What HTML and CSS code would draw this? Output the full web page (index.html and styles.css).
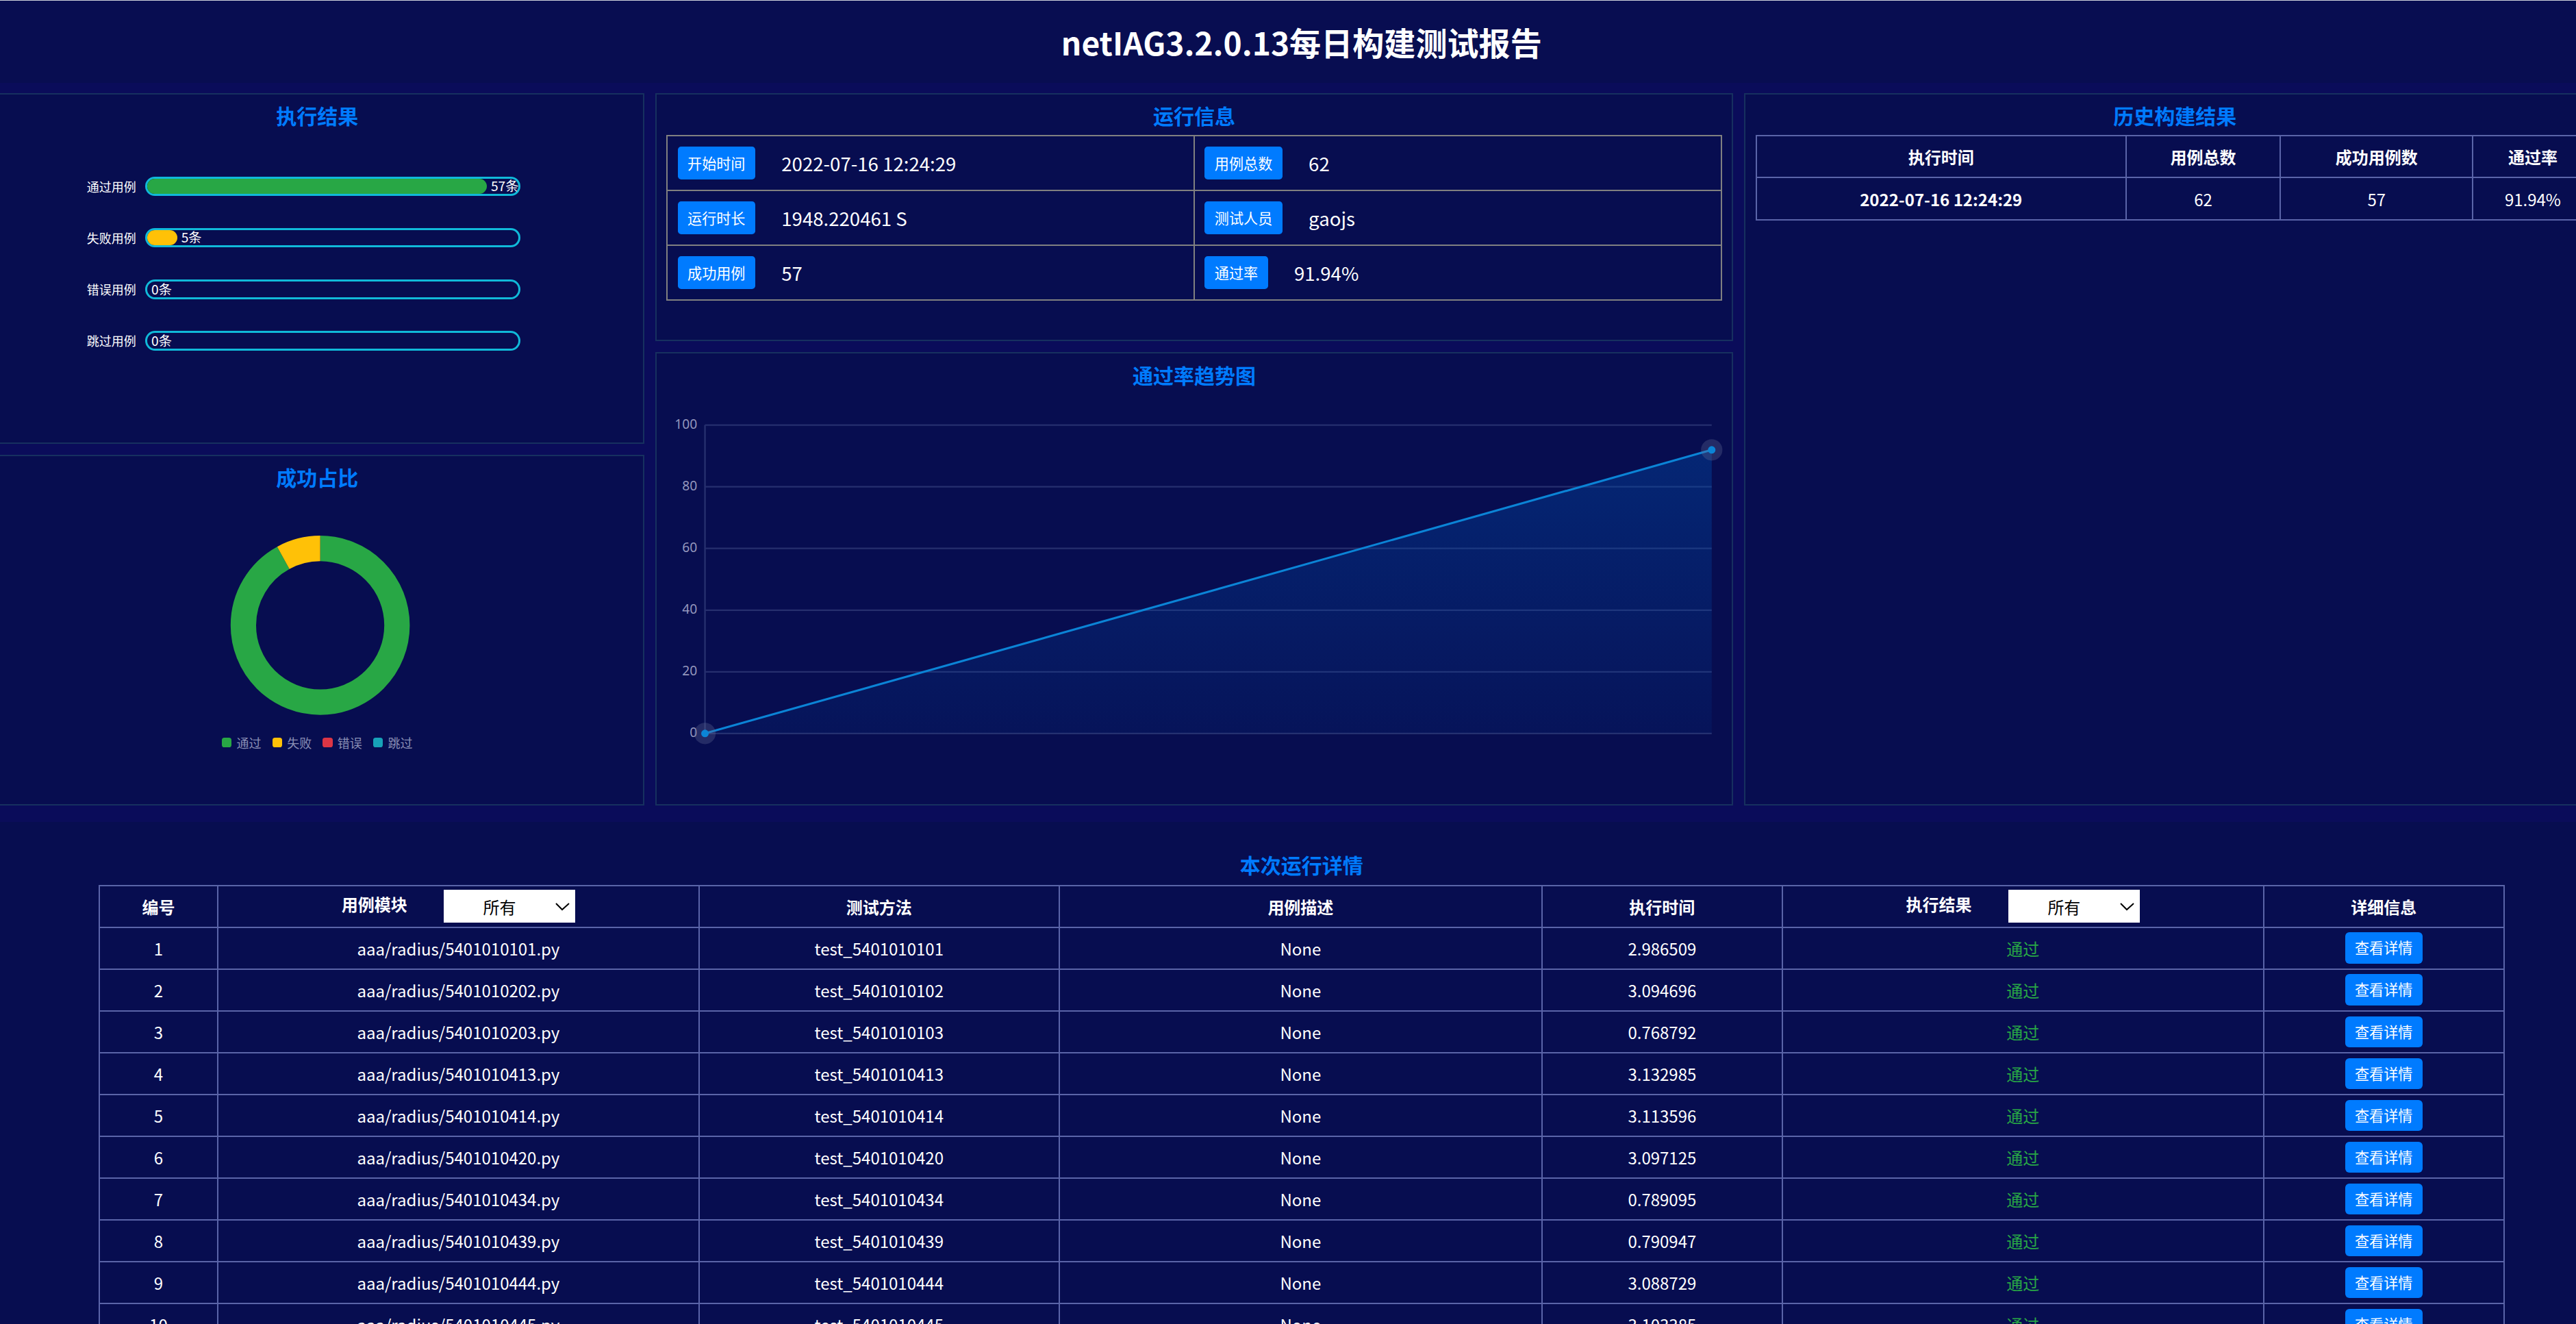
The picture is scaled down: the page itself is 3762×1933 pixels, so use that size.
FILE: index.html
```html
<!DOCTYPE html>
<html lang="zh-CN">
<head>
    <meta charset="UTF-8">
    <meta name="viewport" content="width=device-width, initial-scale=1.0">
    <title>netIAG3.2.0.13每日构建测试报告</title>
    <link rel="stylesheet" href="styles.css">
</head>
<body>
<div class="page">
    <header class="top">
        <h1>netIAG3.2.0.13每日构建测试报告</h1>
    </header>

    <div class="board">
        <div class="col col-left">
            <section class="panel summary">
                <h3>执行结果</h3>
                <div class="bars">
                    <div class="bar-row">
                        <span class="bar-label">通过用例</span>
                        <div class="track"><div class="fill pass" style="width: 91.94%"></div><span class="count">57条</span></div>
                    </div>
                    <div class="bar-row">
                        <span class="bar-label">失败用例</span>
                        <div class="track"><div class="fill fail" style="width: 8.06%"></div><span class="count">5条</span></div>
                    </div>
                    <div class="bar-row">
                        <span class="bar-label">错误用例</span>
                        <div class="track"><div class="fill error" style="width: 0%"></div><span class="count">0条</span></div>
                    </div>
                    <div class="bar-row">
                        <span class="bar-label">跳过用例</span>
                        <div class="track"><div class="fill skip" style="width: 0%"></div><span class="count">0条</span></div>
                    </div>
                </div>
            </section>

            <section class="panel ratio">
                <h3>成功占比</h3>
                <svg class="donut" width="384" height="140" viewBox="0 0 384 140">
                    <g transform="rotate(-90 194 80.8)">
                        <circle cx="194" cy="80.8" r="46.75" fill="none" stroke="#28a745" stroke-width="15.5"
                                stroke-dasharray="270.05 293.74"></circle>
                        <circle cx="194" cy="80.8" r="46.75" fill="none" stroke="#ffc107" stroke-width="15.5"
                                stroke-dasharray="23.69 293.74" stroke-dashoffset="-270.05"></circle>
                    </g>
                </svg>
                <ul class="legend">
                    <li><i class="dot pass"></i>通过</li>
                    <li><i class="dot fail"></i>失败</li>
                    <li><i class="dot error"></i>错误</li>
                    <li><i class="dot skip"></i>跳过</li>
                </ul>
            </section>
        </div>

        <div class="col col-mid">
            <section class="panel info">
                <h3>运行信息</h3>
                <table class="info-table">
                    <tr>
                        <td><div class="cell"><span class="tag">开始时间</span><span class="val">2022-07-16 12:24:29</span></div></td>
                        <td><div class="cell"><span class="tag">用例总数</span><span class="val">62</span></div></td>
                    </tr>
                    <tr>
                        <td><div class="cell"><span class="tag">运行时长</span><span class="val">1948.220461 S</span></div></td>
                        <td><div class="cell"><span class="tag">测试人员</span><span class="val">gaojs</span></div></td>
                    </tr>
                    <tr>
                        <td><div class="cell"><span class="tag">成功用例</span><span class="val">57</span></div></td>
                        <td><div class="cell"><span class="tag">通过率</span><span class="val">91.94%</span></div></td>
                    </tr>
                </table>
            </section>

            <section class="panel trend">
                <h3>通过率趋势图</h3>
                <svg class="trend-chart" width="654" height="240" viewBox="0 0 654 240">
                    <defs>
                        <linearGradient id="area" x1="0" y1="0" x2="0" y2="1">
                            <stop offset="0" stop-color="#0050b0" stop-opacity="0.38"></stop>
                            <stop offset="1" stop-color="#0050b0" stop-opacity="0.1"></stop>
                        </linearGradient>
                    </defs>
                    <g class="grid">
                        <line x1="29.4" y1="21.5" x2="642" y2="21.5"></line>
                        <line x1="29.4" y1="59" x2="642" y2="59"></line>
                        <line x1="29.4" y1="96.5" x2="642" y2="96.5"></line>
                        <line x1="29.4" y1="134.1" x2="642" y2="134.1"></line>
                        <line x1="29.4" y1="171.6" x2="642" y2="171.6"></line>
                        <line x1="29.4" y1="209.1" x2="642" y2="209.1"></line>
                        <line x1="29.4" y1="21.5" x2="29.4" y2="209.1"></line>
                    </g>
                    <g class="axis">
                        <text x="24.7" y="21.5">100</text>
                        <text x="24.7" y="59">80</text>
                        <text x="24.7" y="96.5">60</text>
                        <text x="24.7" y="134.1">40</text>
                        <text x="24.7" y="171.6">20</text>
                        <text x="24.7" y="209.1">0</text>
                    </g>
                    <polygon points="29.4,209.1 642,36.6 642,209.1" fill="url(#area)"></polygon>
                    <line class="trend-line" x1="29.4" y1="209.1" x2="642" y2="36.6"></line>
                    <circle class="halo" cx="29.4" cy="209.1" r="6.5"></circle>
                    <circle class="halo" cx="642" cy="36.6" r="6.5"></circle>
                    <circle class="point" cx="29.4" cy="209.1" r="2.3"></circle>
                    <circle class="point" cx="642" cy="36.6" r="2.3"></circle>
                </svg>
            </section>
        </div>

        <section class="panel history">
            <h3>历史构建结果</h3>
            <table class="history-table">
                <colgroup>
                    <col style="width: 225px">
                    <col style="width: 94px">
                    <col style="width: 117px">
                    <col>
                </colgroup>
                <tr>
                    <th>执行时间</th>
                    <th>用例总数</th>
                    <th>成功用例数</th>
                    <th>通过率</th>
                </tr>
                <tr>
                    <td class="strong">2022-07-16 12:24:29</td>
                    <td>62</td>
                    <td>57</td>
                    <td>91.94%</td>
                </tr>
            </table>
        </section>
    </div>

    <section class="detail">
        <h3>本次运行详情</h3>
        <table class="detail-table">
            <colgroup>
                <col style="width: 72px">
                <col style="width: 293px">
                <col style="width: 219px">
                <col style="width: 294px">
                <col style="width: 146px">
                <col style="width: 293px">
                <col>
            </colgroup>
            <tr>
                <th>编号</th>
                <th>用例模块 <select class="filter"><option>所有</option></select></th>
                <th>测试方法</th>
                <th>用例描述</th>
                <th>执行时间</th>
                <th>执行结果 <select class="filter"><option>所有</option><option>通过</option><option>失败</option></select></th>
                <th>详细信息</th>
            </tr>
            <tr><td>1</td><td>aaa/radius/5401010101.py</td><td>test_5401010101</td><td>None</td><td>2.986509</td><td class="ok">通过</td><td><button class="btn-detail">查看详情</button></td></tr>
            <tr><td>2</td><td>aaa/radius/5401010202.py</td><td>test_5401010102</td><td>None</td><td>3.094696</td><td class="ok">通过</td><td><button class="btn-detail">查看详情</button></td></tr>
            <tr><td>3</td><td>aaa/radius/5401010203.py</td><td>test_5401010103</td><td>None</td><td>0.768792</td><td class="ok">通过</td><td><button class="btn-detail">查看详情</button></td></tr>
            <tr><td>4</td><td>aaa/radius/5401010413.py</td><td>test_5401010413</td><td>None</td><td>3.132985</td><td class="ok">通过</td><td><button class="btn-detail">查看详情</button></td></tr>
            <tr><td>5</td><td>aaa/radius/5401010414.py</td><td>test_5401010414</td><td>None</td><td>3.113596</td><td class="ok">通过</td><td><button class="btn-detail">查看详情</button></td></tr>
            <tr><td>6</td><td>aaa/radius/5401010420.py</td><td>test_5401010420</td><td>None</td><td>3.097125</td><td class="ok">通过</td><td><button class="btn-detail">查看详情</button></td></tr>
            <tr><td>7</td><td>aaa/radius/5401010434.py</td><td>test_5401010434</td><td>None</td><td>0.789095</td><td class="ok">通过</td><td><button class="btn-detail">查看详情</button></td></tr>
            <tr><td>8</td><td>aaa/radius/5401010439.py</td><td>test_5401010439</td><td>None</td><td>0.790947</td><td class="ok">通过</td><td><button class="btn-detail">查看详情</button></td></tr>
            <tr><td>9</td><td>aaa/radius/5401010444.py</td><td>test_5401010444</td><td>None</td><td>3.088729</td><td class="ok">通过</td><td><button class="btn-detail">查看详情</button></td></tr>
            <tr><td>10</td><td>aaa/radius/5401010445.py</td><td>test_5401010445</td><td>None</td><td>3.103385</td><td class="ok">通过</td><td><button class="btn-detail">查看详情</button></td></tr>
            <tr><td>11</td><td>aaa/radius/5401010446.py</td><td>test_5401010446</td><td>None</td><td>3.095412</td><td class="ok">通过</td><td><button class="btn-detail">查看详情</button></td></tr>
        </table>
    </section>
</div>
</body>
</html>
```

FILE: styles.css
```css
html {
    zoom: 2.4;
    background: #070d50;
}

body {
    margin: 0;
    overflow: hidden;
    font-family: "Noto Sans CJK SC", "Noto Sans", sans-serif;
    color: #fff;
    background: #070d50;
}

.page {
    width: 1584px;
    border-top: 0.5px solid #cfd2dc;
}

.top {
    height: 50px;
    background: #080d51;
}

.top h1 {
    margin: 0;
    font-size: 19.2px;
    line-height: 50px;
    font-weight: bold;
    text-align: center;
}

/* three columns of panels */
.board {
    display: grid;
    grid-template-columns: 398px 656px 524px;
    column-gap: 6.7px;
    margin-left: -6px;
    padding: 6.2px 0 10px;
    background: #0a0c5a;
}

.col {
    display: grid;
    grid-template-columns: minmax(0, 1fr);
    row-gap: 6.7px;
}

.col-left {
    grid-template-rows: 213.3px 213.3px;
}

.col-mid {
    grid-template-rows: 151px 275.6px;
}

.panel {
    box-sizing: border-box;
    min-width: 0;
    border: 1px solid #16305f;
    background: #070d50;
    padding: 4px 6px 0;
}

.panel h3,
.detail h3 {
    margin: 0;
    font-size: 12.5px;
    line-height: 18px;
    color: #007bff;
    text-align: center;
}

/* execution result bars */
.bars {
    margin-top: 18.2px;
}

.bar-row {
    display: flex;
    align-items: center;
    height: 31.3px;
    padding-left: 52px;
}

.bar-label {
    width: 30px;
    margin-right: 5.5px;
    font-size: 7.5px;
    text-align: right;
    white-space: nowrap;
}

.track {
    display: flex;
    align-items: center;
    box-sizing: border-box;
    width: 228.5px;
    height: 12px;
    border: 1.5px solid #10b9d9;
    border-radius: 6px;
}

.fill {
    height: 100%;
    border-radius: 6px;
}

.pass { background: #28a745; }
.fail { background: #ffc107; }
.error { background: #dc3545; }
.skip { background: #17a2b8; }

.count {
    margin-left: 2.5px;
    font-size: 8px;
    line-height: 1;
    white-space: nowrap;
}

/* donut */
.donut {
    display: block;
}

.legend {
    display: flex;
    justify-content: center;
    gap: 6.7px;
    margin: 6.3px 0 0;
    padding: 0;
    list-style: none;
    font-size: 7.5px;
    line-height: 12px;
    color: #8a8fb5;
}

.legend li {
    display: flex;
    align-items: center;
}

.dot {
    width: 6px;
    height: 6px;
    margin-right: 3px;
    border-radius: 1.5px;
}

/* run info */
.info-table {
    width: 100%;
    margin-top: 2.8px;
    border-collapse: collapse;
    table-layout: fixed;
}

.info-table td {
    height: 32.5px;
    padding: 0 6px;
    border: 1px solid #808080;
    white-space: nowrap;
}

.cell {
    display: flex;
    align-items: center;
}

.tag {
    height: 20px;
    line-height: 20px;
    padding: 0 6px;
    background: #007bff;
    border-radius: 2px;
    font-size: 8.8px;
}

.val {
    margin-left: 16px;
    font-size: 11.5px;
    line-height: 20px;
}

/* trend chart */
.trend-chart {
    display: block;
    margin: 0 -6px;
}

.grid line {
    stroke: #262f6e;
    stroke-width: 1;
}

.axis text {
    font-family: "Noto Sans", sans-serif;
    font-size: 8px;
    fill: #9497bd;
    text-anchor: end;
    dominant-baseline: middle;
}

.trend-line {
    stroke: #0b84d6;
    stroke-width: 1.3;
}

.halo {
    fill: rgba(100, 110, 150, 0.32);
}

.point {
    fill: #0b84d6;
}

/* history */
.history-table {
    width: 510px;
    margin-top: 2.8px;
    border-collapse: collapse;
    table-layout: fixed;
}

.history-table th,
.history-table td,
.detail-table th,
.detail-table td {
    border: 1px solid #5a64a8;
    padding: 0;
    font-size: 10px;
    text-align: center;
    vertical-align: middle;
    white-space: nowrap;
}

.history-table th {
    height: 24.5px;
    font-weight: bold;
}

.history-table td {
    height: 25px;
}

.strong {
    font-weight: bold;
}

/* run detail */
.detail {
    padding-top: 17px;
}

.detail-table {
    width: 1464px;
    margin: 3.3px auto 0;
    border-collapse: collapse;
    table-layout: fixed;
}

.detail-table th,
.detail-table td {
    height: 24.6px;
}

.detail-table th {
    font-weight: bold;
}

.filter {
    width: 80px;
    height: 20px;
    margin-left: 20px;
    border: none;
    border-radius: 0;
    background: #fff;
    color: #000;
    font-family: "Noto Sans CJK SC", sans-serif;
    font-size: 10px;
    font-weight: normal;
    text-align: center;
    text-align-last: center;
    vertical-align: middle;
}

.ok {
    color: #28a745;
}

.btn-detail {
    height: 19px;
    padding: 0 6px;
    border: none;
    border-radius: 2.5px;
    background: #007bff;
    color: #fff;
    font-family: "Noto Sans CJK SC", sans-serif;
    font-size: 8.8px;
    line-height: 19px;
    vertical-align: middle;
}
```
